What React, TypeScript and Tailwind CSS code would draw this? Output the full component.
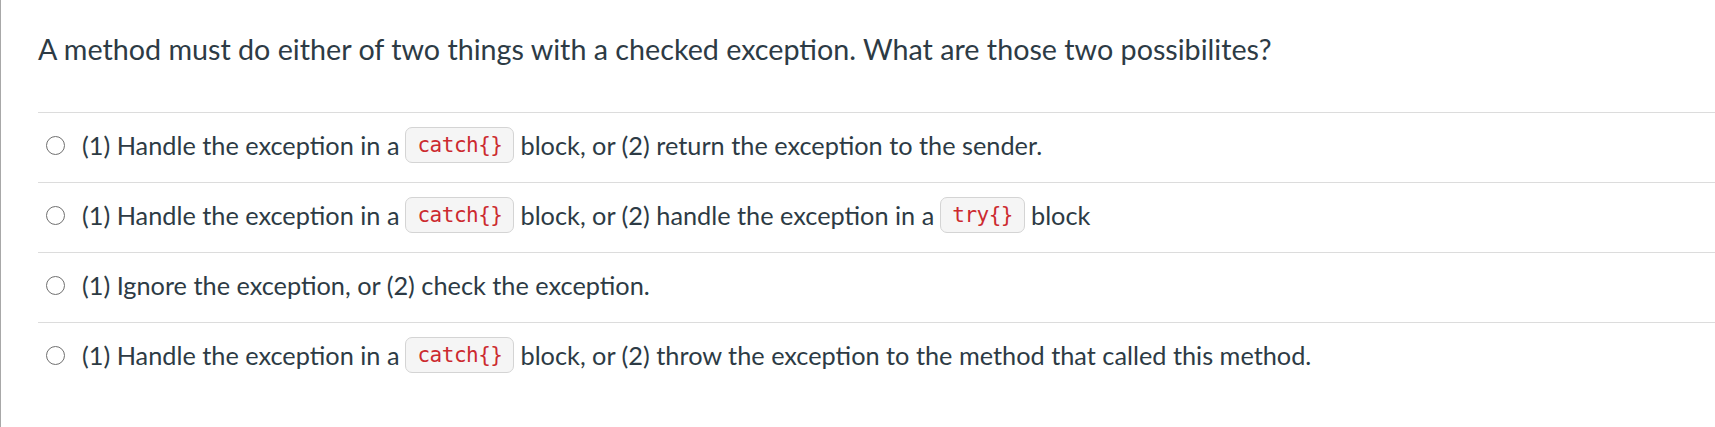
import React from "react";

type Part = string | { code: string };

interface Option {
  id: string;
  parts: Part[];
}

const OPTIONS: Option[] = [
  {
    id: "a",
    parts: ["(1) Handle the exception in a", { code: "catch{}" }, "block, or (2) return the exception to the sender."],
  },
  {
    id: "b",
    parts: ["(1) Handle the exception in a", { code: "catch{}" }, "block, or (2) handle the exception in a", { code: "try{}" }, "block"],
  },
  {
    id: "c",
    parts: ["(1) Ignore the exception, or (2) check the exception."],
  },
  {
    id: "d",
    parts: ["(1) Handle the exception in a", { code: "catch{}" }, "block, or (2) throw the exception to the method that called this method."],
  },
];

const Code = ({ children }: { children: string }) => (
  <code className="mx-[6px] rounded-[7px] border border-[#d4d4d4] bg-[#f5f5f5] px-[11px] py-[3px] font-['DejaVu_Sans_Mono',monospace] text-[21px] leading-[28px] tracking-[-0.5px] text-[#cc2a2f]">
    {children}
  </code>
);

export default function App() {
  return (
    <div className="h-[427px] w-[1715px] overflow-hidden border-l border-[#a8a8a8] bg-white font-['Lato',sans-serif] text-[#2d3b45]">
      <div className="pl-[37px]">
        <h2 className="pt-[32px] pb-[46px] text-[28.7px] leading-[34px] font-normal">
          A method must do either of two things with a checked exception. What are those two possibilites?
        </h2>
        <ul>
          {OPTIONS.map((opt) => (
            <li key={opt.id} className="flex h-[70px] items-center border-t border-[#dcdcdc] pb-[5px] pl-[8px]">
              <span className="mr-[17px] h-[19px] w-[19px] shrink-0 rounded-full border-[1.5px] border-[#707070] bg-white" />
              <div className="flex items-center text-[25.3px] leading-[34px] whitespace-pre">
                {opt.parts.map((p, i) =>
                  typeof p === "string" ? <span key={i}>{p}</span> : <Code key={i}>{p.code}</Code>
                )}
              </div>
            </li>
          ))}
        </ul>
      </div>
    </div>
  );
}
